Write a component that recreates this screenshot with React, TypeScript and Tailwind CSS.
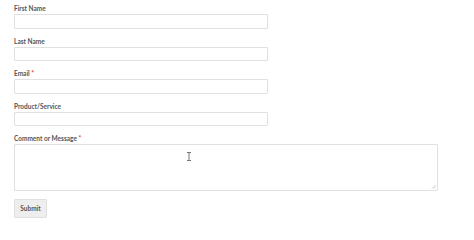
import React from "react";

function Label({ text, required }: { text: string; required?: boolean }) {
  return (
    <label className="block h-[8px] text-[6.5px] leading-[8px] font-bold text-[#555] mb-[1px]">
      {text}
      {required && <span className="text-[#d63637] ml-[1.5px]">*</span>}
    </label>
  );
}

export default function App() {
  const fields: { t: string; r?: boolean }[] = [
    { t: "First Name" },
    { t: "Last Name" },
    { t: "Email", r: true },
    { t: "Product/Service" },
  ];
  return (
    <div
      className="relative w-[474px] h-[224px] bg-white pl-[14px] pt-[5px]"
      style={{ fontFamily: "Lato, 'Open Sans', sans-serif" }}
    >
      {fields.map((f) => (
        <div key={f.t} className="mb-[9px]">
          <Label text={f.t} required={f.r} />
          <div className="w-[254px] h-[14.5px] border border-[#e0e0e0] rounded-[1px] bg-white" />
        </div>
      ))}
      <div className="mb-[8px]">
        <Label text="Comment or Message" required />
        <div className="relative w-[424px] h-[47px] border border-[#e0e0e0] rounded-[1px] bg-white">
          <svg className="absolute right-[1px] bottom-[1px]" width="5" height="5" viewBox="0 0 5 5">
            <path d="M4.5 1 L1 4.5 M4.5 3 L3 4.5" stroke="#aaa" strokeWidth="0.6" />
          </svg>
        </div>
      </div>
      <button className="block w-[33px] h-[19px] bg-[#eee] border border-[#e0e0e0] rounded-[1px] text-[6.5px] font-bold text-[#555]">
        Submit
      </button>
      <svg className="absolute left-[185.5px] top-[152px]" width="6" height="9" viewBox="0 0 6 9">
        <path d="M1 0.5 H5 M3 0.5 V8.5 M1 8.5 H5" stroke="#777" strokeWidth="1" fill="none" />
      </svg>
    </div>
  );
}
